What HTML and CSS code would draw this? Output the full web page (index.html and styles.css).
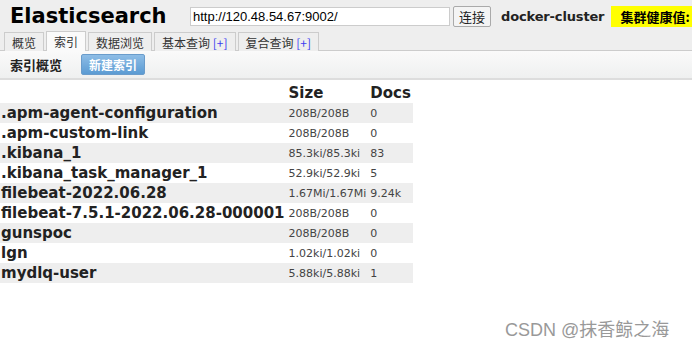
FILE: index.html
```html
<!DOCTYPE html>
<html>
<head>
<meta charset="utf-8">
<link rel="stylesheet" href="styles.css">
</head>
<body>
<div class="header">
  <div class="topbar">
    <h1 class="logo">Elasticsearch</h1>
    <input class="url" type="text" value="http://120.48.54.67:9002/">
    <button class="connect">连接</button>
    <span class="cluster">docker-cluster</span>
    <span class="health">集群健康值:</span>
  </div>
  <div class="tabs">
    <div class="tab">概览</div>
    <div class="tab active">索引</div>
    <div class="tab">数据浏览</div>
    <div class="tab">基本查询 <span class="plus">[+]</span></div>
    <div class="tab">复合查询 <span class="plus">[+]</span></div>
  </div>
</div>
<div class="toolbar">
  <span class="tb-title">索引概览</span>
  <span class="newbtn">新建索引</span>
</div>
<table class="idx">
  <thead>
    <tr><th></th><th>Size</th><th>Docs</th></tr>
  </thead>
  <tbody>
    <tr><td class="name">.apm-agent-configuration</td><td>208B/208B</td><td>0</td></tr>
    <tr><td class="name">.apm-custom-link</td><td>208B/208B</td><td>0</td></tr>
    <tr><td class="name">.kibana_1</td><td>85.3ki/85.3ki</td><td>83</td></tr>
    <tr><td class="name">.kibana_task_manager_1</td><td>52.9ki/52.9ki</td><td>5</td></tr>
    <tr><td class="name">filebeat-2022.06.28</td><td>1.67Mi/1.67Mi</td><td>9.24k</td></tr>
    <tr><td class="name">filebeat-7.5.1-2022.06.28-000001</td><td>208B/208B</td><td>0</td></tr>
    <tr><td class="name">gunspoc</td><td>208B/208B</td><td>0</td></tr>
    <tr><td class="name">lgn</td><td>1.02ki/1.02ki</td><td>0</td></tr>
    <tr><td class="name">mydlq-user</td><td>5.88ki/5.88ki</td><td>1</td></tr>
  </tbody>
</table>
<div class="watermark">CSDN @抹香鲸之海</div>
</body>
</html>
```
FILE: styles.css
```css
html, body {
  margin: 0;
  padding: 0;
  background: #fff;
  font-family: "DejaVu Sans", Verdana, "Noto Sans CJK SC", sans-serif;
  color: #000;
  width: 692px;
  height: 344px;
  overflow: hidden;
  position: relative;
}
.header {
  background: #eee;
  border-bottom: 1px solid #ccc;
}
.topbar {
  display: flex;
  align-items: center;
  height: 32px;
  white-space: nowrap;
  overflow: hidden;
}
.topbar > * {
  flex-shrink: 0;
}
.logo {
  margin: 0 0 0 10px;
  font-size: 21px;
  font-weight: bold;
  width: 180px;
  font-family: "DejaVu Sans", Verdana, sans-serif;
}
.url {
  box-sizing: border-box;
  width: 260px;
  height: 19px;
  margin: 0;
  padding: 0 2px;
  border: 1px solid #ccc;
  font-family: "Liberation Sans", Arial, sans-serif;
  font-size: 13px;
  color: #000;
  background: #fff;
}
.connect {
  margin-left: 3px;
  height: 21px;
  padding: 0 5px;
  font-family: "Noto Sans CJK SC", sans-serif;
  font-size: 13px;
  background: #f4f4f4;
  border: 1px solid #aaa;
  border-radius: 2px;
  color: #222;
}
.cluster {
  margin-left: 10px;
  font-weight: bold;
  font-size: 13px;
  letter-spacing: -0.15px;
  font-family: "DejaVu Sans", Verdana, sans-serif;
  color: #222;
}
.health {
  margin-left: 7px;
  background: #ff0;
  padding: 1px 2px 1px 9px;
  font-weight: bold;
  font-size: 13px;
  font-family: "Noto Sans CJK SC", sans-serif;
}
.tabs {
  display: flex;
  gap: 2px;
  padding-left: 4px;
  height: 18px;
  align-items: flex-end;
}
.tab {
  height: 18px;
  line-height: 19px;
  padding: 0 7px;
  border: 1px solid #ccc;
  border-bottom: none;
  font-family: "Noto Sans CJK SC", sans-serif;
  font-size: 12px;
  color: #333;
  background: #eee;
  margin-bottom: -1px;
}
.tab.active {
  background: #fafafa;
  height: 19px;
  position: relative;
}
.plus {
  color: #3c3cf0;
}
.toolbar {
  height: 27px;
  display: flex;
  align-items: center;
  background: linear-gradient(#fafafa, #eff0f0);
  border-bottom: 2px solid #ddd;
}
.tb-title {
  margin-left: 10px;
  font-weight: bold;
  font-size: 13px;
  font-family: "Noto Sans CJK SC", sans-serif;
  color: #222;
}
.newbtn {
  margin-left: 19px;
  height: 19px;
  line-height: 19px;
  padding: 0 7px;
  font-family: "Noto Sans CJK SC", sans-serif;
  font-size: 12px;
  font-weight: bold;
  color: #fff;
  background: linear-gradient(#8ebde6, #5b9bd3);
  border: 1px solid #6a9ccb;
  border-radius: 2px;
}
.idx {
  border-collapse: collapse;
  margin-top: 3px;
}
.idx th {
  text-align: left;
  font-size: 15px;
  font-weight: bold;
  height: 20px;
  padding: 0 2px;
  color: #222;
}
.idx td {
  height: 20px;
  padding: 0 2px;
  font-size: 11px;
  color: #444;
  white-space: nowrap;
}
.idx td.name {
  font-size: 15px;
  font-weight: bold;
  color: #222;
  padding-left: 1px;
  padding-right: 2px;
}
.idx tbody tr:nth-child(odd) {
  background: #eee;
}
.watermark {
  position: absolute;
  left: 505px;
  top: 315px;
  font-size: 18px;
  color: #999;
  font-family: "Liberation Sans", "Noto Sans CJK SC", sans-serif;
}
```
